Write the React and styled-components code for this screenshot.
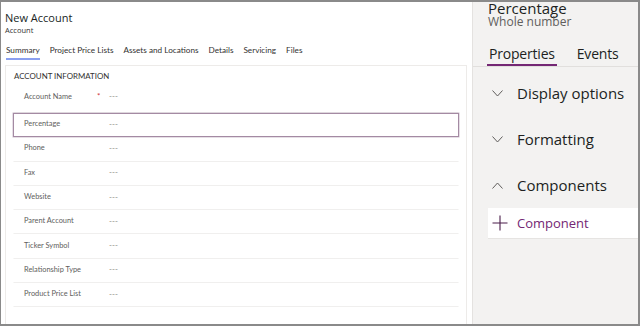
import React from "react";
import styled, { createGlobalStyle } from "styled-components";

const Global = createGlobalStyle`
  html, body { margin: 0; padding: 0; background: #ffffff; }
  body { font-family: "Open Sans", "Noto Sans", sans-serif; }
  * { box-sizing: border-box; }
`;

const Frame = styled.div`
  width: 640px;
  height: 326px;
  border-top: 2px solid #8a8a8a;
  border-left: 1px solid #8a8a8a;
  border-right: 2px solid #8a8a8a;
  border-bottom: 2px solid #8a8a8a;
  display: flex;
  overflow: hidden;
`;

const FormPane = styled.div`
  width: 472px;
  flex: none;
  background: #ffffff;
  border-right: 1px solid #e4e2e0;
  padding: 0 5px 0 4px;
  display: flex;
  flex-direction: column;
  font-family: "Lato", "Open Sans", sans-serif;
`;

const Title = styled.div`
  font-size: 11px;
  color: #201f1e;
  margin-top: 9px;
  line-height: 14px;
  font-family: "Open Sans", sans-serif;
`;

const Subtitle = styled.div`
  font-size: 7.5px;
  color: #323130;
  line-height: 10px;
  font-family: "Open Sans", sans-serif;
`;

const TabRow = styled.div`
  display: flex;
  gap: 10px;
  margin-top: 9px;
  height: 19px;
  padding-left: 1px;
`;

const Tab = styled.div`
  font-size: 8.2px;
  color: #323130;
  line-height: 12px;
  height: 16px;
  border-bottom: 2px solid ${(p) => (p.$active ? "#8a9ff0" : "transparent")};
`;

const Card = styled.div`
  flex: 1;
  border: 1px solid #edebe9;
  border-bottom: none;
  margin-top: 2px;
  padding: 0 7px 0 7px;
  display: flex;
  flex-direction: column;
`;

const SectionTitle = styled.div`
  font-size: 7.9px;
  color: #323130;
  line-height: 10px;
  padding: 5px 0 0 1px;
  height: 20px;
`;

const Row = styled.div`
  display: flex;
  align-items: center;
  flex: none;
  height: ${(p) => p.$h || 24.3}px;
  padding: 0 0 ${(p) => p.$pb || 3}px 10px;
  border: 1px solid ${(p) => (p.$selected ? "#a48aa3" : "transparent")};
  border-bottom: 1px solid ${(p) => (p.$selected ? "#a48aa3" : "#f0efee")};
  ${(p) => (p.$selected ? "box-shadow: 0 0 0 0.5px #cdbfcc;" : "")}
`;

const Label = styled.div`
  width: 85px;
  font-size: 7.4px;
  color: #605e5c;
  flex: none;
`;

const Star = styled.div`
  width: 12px;
  color: #d13438;
  font-size: 8px;
  flex: none;
  margin-left: -12px;
`;

const Value = styled.div`
  font-size: 8px;
  color: #8a8886;
`;

const PropsPane = styled.div`
  flex: 1;
  background: #f3f2f1;
  display: flex;
  flex-direction: column;
`;

const PropsHeader = styled.div`
  padding: 0 0 0 15px;
`;

const PropTitle = styled.div`
  font-size: 15px;
  color: #201f1e;
  line-height: 13px;
  padding-top: 0;
`;

const PropSub = styled.div`
  font-size: 12px;
  color: #605e5c;
  line-height: 14px;
`;

const PTabs = styled.div`
  display: flex;
  gap: 22px;
  margin-top: 16px;
  border-bottom: 1px solid #e1dfdd;
  margin-left: -15px;
  padding-left: 16px;
`;

const PTab = styled.div`
  font-size: 14px;
  color: #201f1e;
  line-height: 18px;
  padding-bottom: 3px;
  position: relative;
  letter-spacing: -0.2px;
  &::after {
    content: "";
    position: absolute;
    left: -2px;
    right: -2px;
    bottom: 0px;
    height: 2px;
    background: ${(p) => (p.$active ? "#742774" : "transparent")};
  }
`;

const Groups = styled.div`
  margin-top: 3px;
  display: flex;
  flex-direction: column;
`;

const Group = styled.div`
  display: flex;
  align-items: center;
  height: 46px;
  padding-left: 19px;
  gap: 14px;
  font-size: 15px;
  color: #201f1e;
`;

const AddBox = styled.div`
  margin-left: 15px;
  margin-top: 0;
  height: 31px;
  background: #ffffff;
  border-bottom: 1px solid #e6e4e2;
  display: flex;
  align-items: center;
  padding-left: 4px;
  gap: 9px;
  color: #742774;
  font-size: 13px;
`;

const Chevron = ({ up }) => (
  <svg width="11" height="7" viewBox="0 0 11 7" fill="none">
    <path
      d={up ? "M0.5 6.5 L5.5 1 L10.5 6.5" : "M0.5 0.5 L5.5 6 L10.5 0.5"}
      stroke="#605e5c"
      strokeWidth="1"
    />
  </svg>
);

const Plus = () => (
  <svg width="16" height="16" viewBox="0 0 16 16">
    <path d="M8 0.5 V15.5 M0.5 8 H15.5" stroke="#4a1d4a" strokeWidth="1.1" />
  </svg>
);

const fields = [
  { label: "Account Name", required: true },
  { label: "Percentage", selected: true },
  { label: "Phone" },
  { label: "Fax" },
  { label: "Website" },
  { label: "Parent Account" },
  { label: "Ticker Symbol" },
  { label: "Relationship Type" },
  { label: "Product Price List" },
];

export default function App() {
  return (
    <>
      <Global />
      <Frame>
        <FormPane>
          <Title>New Account</Title>
          <Subtitle>Account</Subtitle>
          <TabRow>
            <Tab $active>Summary</Tab>
            <Tab>Project Price Lists</Tab>
            <Tab>Assets and Locations</Tab>
            <Tab>Details</Tab>
            <Tab>Servicing</Tab>
            <Tab>Files</Tab>
          </TabRow>
          <Card>
            <SectionTitle>ACCOUNT INFORMATION</SectionTitle>
            {fields.map((f, i) => (
              <Row
                key={f.label}
                $selected={f.selected}
                $h={i === 0 ? 27 : undefined}
                $pb={i === 0 ? 7 : undefined}
              >
                <Label>{f.label}</Label>
                {f.required ? <Star>*</Star> : null}
                <Value>---</Value>
              </Row>
            ))}
          </Card>
        </FormPane>
        <PropsPane>
          <PropsHeader>
            <PropTitle>Percentage</PropTitle>
            <PropSub>Whole number</PropSub>
            <PTabs>
              <PTab $active>Properties</PTab>
              <PTab>Events</PTab>
            </PTabs>
          </PropsHeader>
          <Groups>
            <Group>
              <Chevron />
              <span>Display options</span>
            </Group>
            <Group>
              <Chevron />
              <span>Formatting</span>
            </Group>
            <Group>
              <Chevron up />
              <span>Components</span>
            </Group>
          </Groups>
          <AddBox>
            <Plus />
            <span>Component</span>
          </AddBox>
        </PropsPane>
      </Frame>
    </>
  );
}
